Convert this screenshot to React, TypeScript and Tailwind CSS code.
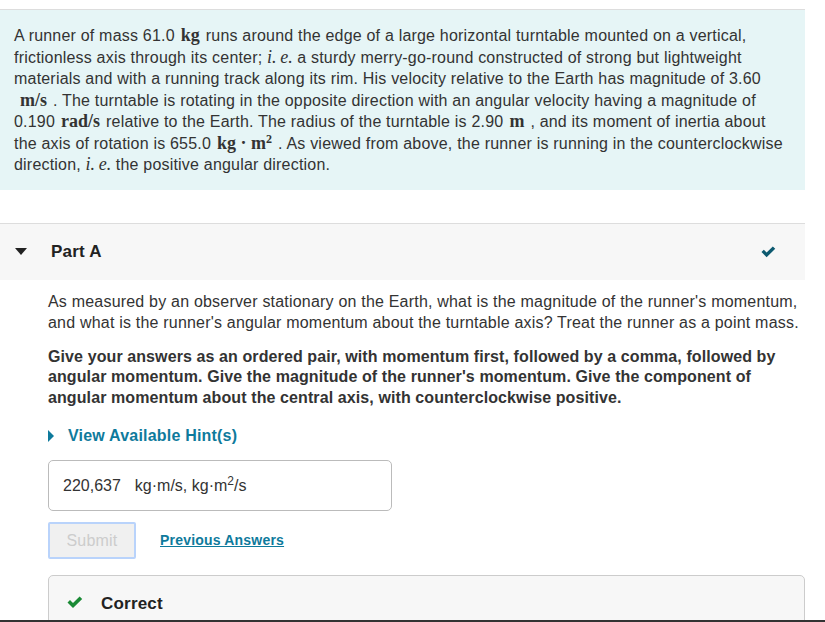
const sans = { fontFamily: '"Liberation Sans", Arial, sans-serif' };
const serif = { fontFamily: '"Liberation Serif", "DejaVu Serif", serif' };

function M({ children }: { children: React.ReactNode }) {
  return (
    <span className="px-[6px] text-[18px] font-bold tracking-normal" style={serif}>
      {children}
    </span>
  );
}

function Ie() {
  return (
    <span className="text-[18px] italic tracking-normal" style={serif}>
      i.&thinsp;e.
    </span>
  );
}

function Check({ className }: { className: string }) {
  return (
    <svg viewBox="0 0 16 12" className={className} fill="currentColor">
      <path d="M0.5 6 L3 3.6 L6 6.5 L12.6 0 L15.2 2.5 L6 11.6 Z" />
    </svg>
  );
}

export default function App() {
  return (
    <div className="flex h-[622px] flex-col overflow-hidden bg-white text-[#333] tracking-[0.2px]" style={sans}>
      <div className="flex-1 overflow-hidden pt-[9px]">
        <div className="mr-[20px] border-t border-[#ddd] bg-[#e6f5f6] px-[14px] pb-[14px] pt-[15px] text-[16px] leading-[21.5px] text-[#333]">
          A runner of mass 61.0<M>kg</M>runs around the edge of a large horizontal turntable mounted on a vertical,
          <br />
          frictionless axis through its center; <Ie /> a sturdy merry-go-round constructed of strong but lightweight
          <br />
          materials and with a running track along its rim. His velocity relative to the Earth has magnitude of 3.60
          <br />
          <M>m/s</M>. The turntable is rotating in the opposite direction with an angular velocity having a magnitude of
          <br />
          0.190<M>rad/s</M>relative to the Earth. The radius of the turntable is 2.90<M>m</M>, and its moment of inertia about
          <br />
          the axis of rotation is 655.0<M>kg · m<sup className="text-[12px]">2</sup></M>. As viewed from above, the runner is running in the counterclockwise
          <br />
          direction, <Ie /> the positive angular direction.
        </div>

        <div className="mr-[20px] mt-[33px] flex h-[57px] items-center border-t border-[#ddd] bg-[#f7f7f7]">
          <span className="ml-[15px] h-0 w-0 border-x-[6px] border-t-[7px] border-x-transparent border-t-[#222]" />
          <span className="ml-[24px] text-[17px] font-bold text-[#222]">Part A</span>
          <Check className="ml-auto mr-[29px] h-[12px] w-[15px] text-[#0d5a70]" />
        </div>

        <div className="mr-[20px] pl-[48px] pt-[11px]">
          <p className="text-[16px] leading-[21px] text-[#333]">
            As measured by an observer stationary on the Earth, what is the magnitude of the runner's momentum,
            <br />
            and what is the runner's angular momentum about the turntable axis? Treat the runner as a point mass.
          </p>
          <p className="mt-[14px] text-[16px] font-bold leading-[20.5px] tracking-[0.1px] text-[#333]">
            Give your answers as an ordered pair, with momentum first, followed by a comma, followed by
            <br />
            angular momentum. Give the magnitude of the runner's momentum. Give the component of
            <br />
            angular momentum about the central axis, with counterclockwise positive.
          </p>
          <div className="mt-[16px] flex items-center">
            <span className="h-0 w-0 border-y-[6px] border-l-[6px] border-y-transparent border-l-[#0e7a9c]" />
            <span className="ml-[14px] text-[16px] font-bold text-[#0e7a9c]">View Available Hint(s)</span>
          </div>
          <div className="mt-[12px] flex h-[51px] w-[344px] items-center rounded-[5px] border border-[#bbb] pl-[14px] text-[16px] tracking-normal text-[#333]">
            <span>220,637</span>
            <span className="ml-[14px]">
              kg·m/s, kg·m<sup className="text-[12px]">2</sup>/s
            </span>
          </div>
          <div className="mt-[11px] flex items-center">
            <button className="h-[37px] w-[88px] rounded-[2px] border-2 border-[#b9d3fb] bg-[#f0f0f0] text-[16px] text-[#ccc]">
              Submit
            </button>
            <a className="ml-[24px] text-[14px] font-bold text-[#0e7a9c] underline">Previous Answers</a>
          </div>
          <div className="mt-[16px] flex h-[80px] items-start rounded-t-[5px] border border-[#ccc] bg-[#f7f7f7] pl-[18px] pt-[15px]">
            <Check className="mt-[5px] h-[13px] w-[16px] text-[#1a8a35]" />
            <span className="ml-[18px] text-[17px] font-bold text-[#222]">Correct</span>
          </div>
        </div>
      </div>
      <div className="h-[2px] shrink-0 bg-[#333]" />
    </div>
  );
}
